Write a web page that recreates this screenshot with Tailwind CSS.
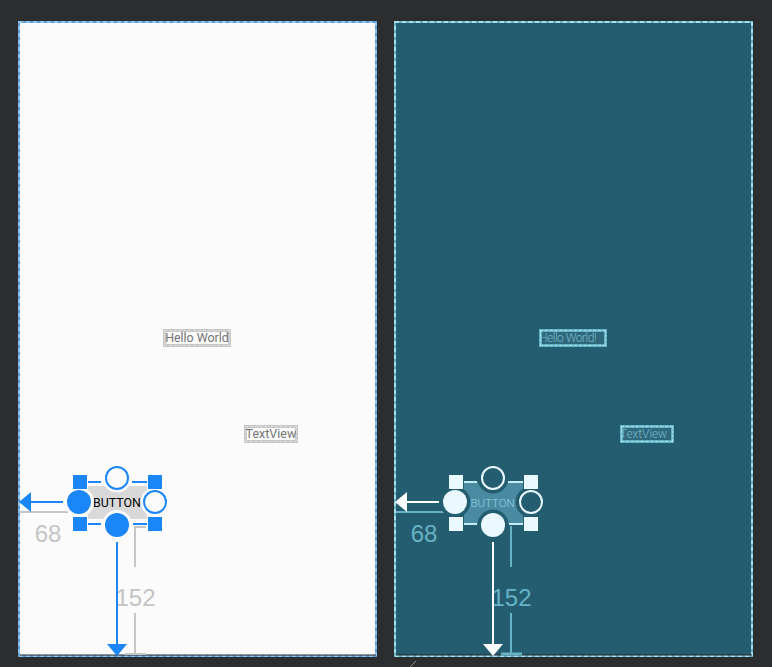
<!DOCTYPE html>
<html lang="en">
  <head>
    <meta charset="UTF-8" />
    <meta name="viewport" content="width=device-width, initial-scale=1.0" />
    <title>Layout editor</title>
    <script src="https://cdn.jsdelivr.net/npm/@tailwindcss/browser@4"></script>
  </head>
  <body class="bg-[#2c2d2f] w-[772px] h-[667px] overflow-hidden font-['Roboto',sans-serif]">
    <div class="flex gap-[17px] pl-[18px] pt-[21px]">
      <!-- Design surface -->
      <div class="relative w-[359px] h-[636px] bg-[#fbfbfb] border-2 border-[#5b9bd5]">
        <div class="absolute left-[143px] top-[306px] w-[68px] h-[18px] shadow-[inset_0_0_0_3px_#c6c6c6] outline outline-1 outline-dashed -outline-offset-2 outline-[#dedede] flex items-center justify-center text-[12.4px] leading-none text-[#757575] whitespace-nowrap">Hello World</div>
        <div class="absolute left-[224px] top-[402px] w-[54px] h-[18px] shadow-[inset_0_0_0_3px_#c6c6c6] outline outline-1 outline-dashed -outline-offset-2 outline-[#dedede] flex items-center justify-center text-[12.5px] leading-none text-[#757575] whitespace-nowrap">TextView</div>
        <svg class="absolute -left-[2px] -top-[2px] overflow-visible" width="359" height="636" viewBox="18 21 359 636" fill="none">
          <rect x="19" y="22" width="357" height="634" stroke="#8fc1ea" stroke-width="2" stroke-dasharray="4 3" />
          <path d="M20 655H376" stroke="#26282b" stroke-width="1" />
          <!-- grey constraints -->
          <path d="M20 512H68M135 526V567M135 613V654" stroke="#c6c6c6" stroke-width="2" />
          <path d="M125 654H146" stroke="#c6c6c6" stroke-width="2" />
          <path d="M134 527H146" stroke="#c6c6c6" stroke-width="2" />
          <text x="48" y="542" text-anchor="middle" font-family="Liberation Sans" font-size="24" fill="#c4c4c4">68</text>
          <text x="135.5" y="606" text-anchor="middle" font-family="Liberation Sans" font-size="24" fill="#c4c4c4">152</text>
          <!-- button -->
          <rect x="88" y="486" width="59" height="33" fill="#d9d9d9" />
          <text x="117" y="506.5" text-anchor="middle" font-family="Roboto" font-size="12.4" fill="#000000">BUTTON</text>
          <circle cx="79" cy="502" r="15" fill="#fbfbfb" />
          <circle cx="155" cy="502" r="14.5" fill="#fbfbfb" />
          <circle cx="117" cy="478" r="14.5" fill="#fbfbfb" />
          <circle cx="117" cy="525" r="15" fill="#fbfbfb" />
          <!-- handles -->
          <path d="M88 482H101M132 482H147M88 524H101M133 524H147" stroke="#1b86f7" stroke-width="2" />
          <path d="M73 475H87V489H73ZM148 475H162V489H148ZM73 517H87V531H73ZM148 517H162V531H148Z" fill="#1b86f7" />
          <circle cx="79" cy="502" r="12" fill="#1b86f7" />
          <circle cx="117" cy="525" r="12" fill="#1b86f7" />
          <circle cx="117" cy="478" r="11" fill="#fbfbfb" stroke="#1b86f7" stroke-width="2" />
          <circle cx="155" cy="502" r="11" fill="#fbfbfb" stroke="#1b86f7" stroke-width="2" />
          <!-- arrows -->
          <path d="M30 502H63M117 542V646" stroke="#1b86f7" stroke-width="2" />
          <path d="M19 502L31 492V512Z" fill="#1b86f7" />
          <path d="M107 644H127L117 656Z" fill="#1b86f7" />
        </svg>
      </div>

      <!-- Blueprint surface -->
      <div class="relative w-[359px] h-[636px] bg-[#255d70] border-2 border-[#66b3c6]">
        <div class="absolute left-[143px] top-[306px] w-[68px] h-[18px] bg-[#30687b] shadow-[inset_0_0_0_3px_#66b3c6] outline outline-1 outline-dashed -outline-offset-2 outline-[#a5e0ec] flex items-center text-[12px] font-light leading-none text-[#74b9cb] whitespace-nowrap overflow-hidden"><span class="tracking-[-0.5px]">Hello World!</span></div>
        <div class="absolute left-[224px] top-[402px] w-[54px] h-[18px] bg-[#30687b] shadow-[inset_0_0_0_3px_#66b3c6] outline outline-1 outline-dashed -outline-offset-2 outline-[#a5e0ec] flex items-center text-[12px] font-light leading-none text-[#74b9cb] whitespace-nowrap overflow-hidden"><span class="tracking-[-0.1px]">TextView</span></div>
        <svg class="absolute -left-[2px] -top-[2px] overflow-visible" width="359" height="636" viewBox="18 21 359 636" fill="none">
          <rect x="19" y="22" width="357" height="634" stroke="#a5e0ec" stroke-width="2" stroke-dasharray="4 3" />
          <path d="M20 655H376" stroke="#26282b" stroke-width="1" />
          <path d="M20 512H68M135 526V567M135 613V654" stroke="#66b3c6" stroke-width="2" />
          <path d="M125 654H146" stroke="#66b3c6" stroke-width="3" />
          <text x="48" y="542" text-anchor="middle" font-family="Liberation Sans" font-size="24" fill="#66b3c6">68</text>
          <text x="135.5" y="606" text-anchor="middle" font-family="Liberation Sans" font-size="24" fill="#66b3c6">152</text>
          <!-- button -->
          <rect x="88" y="482" width="59" height="42" fill="#4a8ba1" />
          <text x="116.5" y="507" text-anchor="middle" font-family="Roboto" font-size="11.5" font-weight="300" fill="#8ed2e4">BUTTON</text>
          <circle cx="79" cy="502" r="15.5" fill="#255d70" />
          <circle cx="155" cy="502" r="15.5" fill="#255d70" />
          <circle cx="117" cy="478" r="15.5" fill="#255d70" />
          <circle cx="117" cy="525" r="15.5" fill="#255d70" />
          <!-- handles -->
          <path d="M88 482H101M132 482H147M88 524H101M133 524H147" stroke="#c4ecf5" stroke-width="2" />
          <path d="M73 475H87V489H73ZM148 475H162V489H148ZM73 517H87V531H73ZM148 517H162V531H148Z" fill="#e9f9ff" />
          <circle cx="79" cy="502" r="12" fill="#e9f9ff" />
          <circle cx="117" cy="525" r="12" fill="#e9f9ff" />
          <circle cx="117" cy="478" r="11" fill="#255d70" stroke="#e9f9ff" stroke-width="2" />
          <circle cx="155" cy="502" r="11" fill="#255d70" stroke="#e9f9ff" stroke-width="2" />
          <!-- arrows -->
          <path d="M30 502H63M117 542V646" stroke="#ffffff" stroke-width="2" />
          <path d="M19 502L31 492V512Z" fill="#ffffff" />
          <path d="M107 644H127L117 656Z" fill="#ffffff" />
          <!-- resize mark -->
          <path d="M34 667L40 661" stroke="#8a8a8a" stroke-width="1" />
        </svg>
      </div>
    </div>
  </body>
</html>
